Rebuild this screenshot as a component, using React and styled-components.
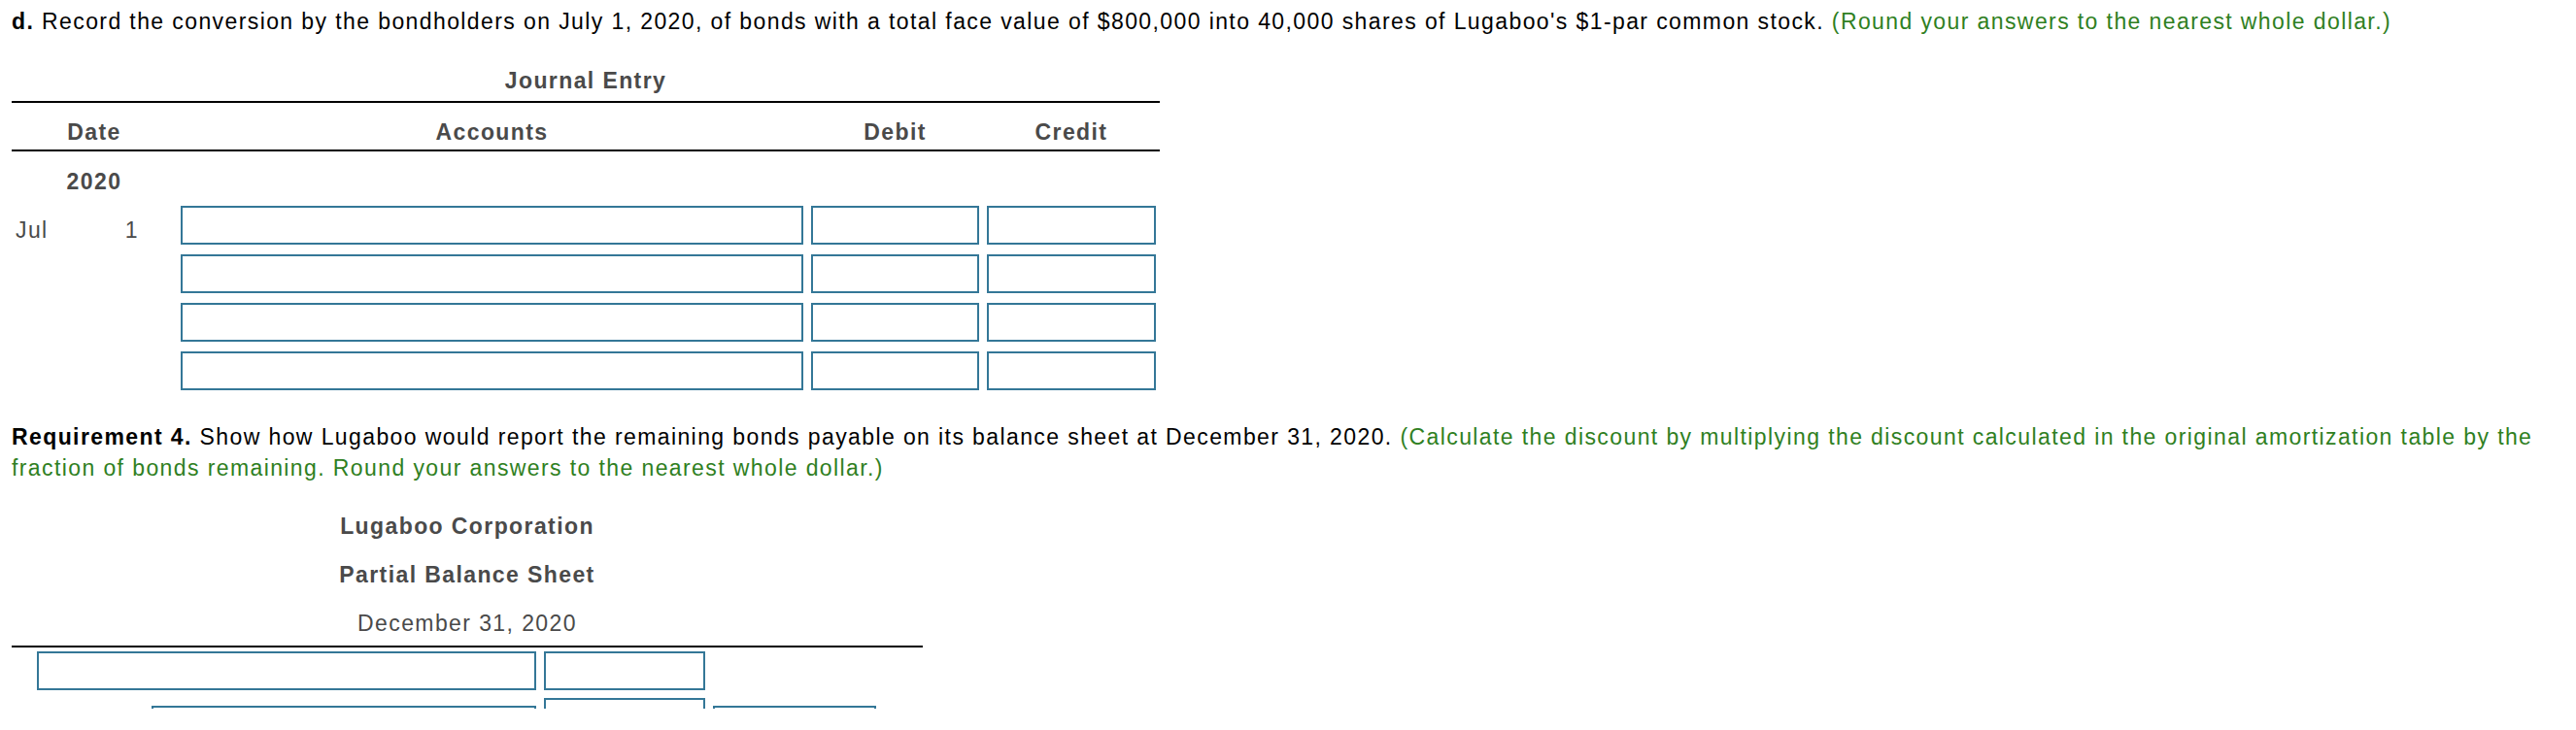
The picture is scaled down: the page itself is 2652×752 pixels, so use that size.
import React from "react";
import styled, { createGlobalStyle } from "styled-components";

const GlobalStyle = createGlobalStyle`
  body {
    margin: 0;
    background: #ffffff;
    font-family: "Liberation Sans", Arial, Helvetica, sans-serif;
  }
`;

const journalRows = [
  { month: "Jul", day: "1" },
  { month: "", day: "" },
  { month: "", day: "" },
  { month: "", day: "" },
];

function App() {
  return (
    <Page>
      <GlobalStyle />
      <Prompt>
        <b>d.</b> Record the conversion by the bondholders on July 1, 2020, of bonds with a total face value of
        $800,000 into 40,000 shares of Lugaboo's $1-par common stock.{" "}
        <Hint>(Round your answers to the nearest whole dollar.)</Hint>
      </Prompt>

      <Journal>
        <TableTitle>Journal Entry</TableTitle>
        <HeadRow>
          <HeadCell>Date</HeadCell>
          <HeadCell>Accounts</HeadCell>
          <HeadCell>Debit</HeadCell>
          <HeadCell>Credit</HeadCell>
        </HeadRow>
        <YearRow>
          <YearCell>2020</YearCell>
        </YearRow>
        {journalRows.map((row, i) => (
          <EntryRow key={i}>
            <DateCell>
              <Month>{row.month}</Month>
              <Day>{row.day}</Day>
            </DateCell>
            <Field />
            <Field />
            <Field />
          </EntryRow>
        ))}
      </Journal>

      <Prompt $gap="26px">
        <b>Requirement 4.</b> Show how Lugaboo would report the remaining bonds payable on its balance sheet at
        December 31, 2020.{" "}
        <Hint>
          (Calculate the discount by multiplying the discount calculated in the original amortization table by the
          fraction of bonds remaining. Round your answers to the nearest whole dollar.)
        </Hint>
      </Prompt>

      <Sheet>
        <SheetTitle $bold>Lugaboo Corporation</SheetTitle>
        <SheetTitle $bold>Partial Balance Sheet</SheetTitle>
        <SheetTitle>December 31, 2020</SheetTitle>
        <SheetRule />
        <SheetRow>
          <LabelField $indent="26px" />
          <Field />
          <Blank />
        </SheetRow>
        <SheetRow>
          <LabelField $indent="144px" $drop="8px" />
          <Field />
          <Field $drop="8px" />
        </SheetRow>
      </Sheet>
    </Page>
  );
}

export default App;

const Page = styled.div`
  height: 730px;
  overflow: hidden;
  padding: 6px 12px 0 12px;
  box-sizing: border-box;
  font-size: 23px;
  letter-spacing: 1.4px;
  line-height: 32px;
  color: #000000;
`;

const Prompt = styled.p`
  margin: ${(p) => p.$gap || "0"} 0 0 0;
  b {
    font-weight: 700;
  }
`;

const Hint = styled.span`
  color: #2f7f22;
`;

const Journal = styled.div`
  width: 1182px;
  margin-top: 29px;
  color: #4a4a4a;
`;

const TableTitle = styled.div`
  font-weight: 700;
  text-align: center;
  padding-bottom: 5px;
  border-bottom: 2px solid #000000;
`;

const grid = `
  display: grid;
  grid-template-columns: 170px 649px 181px 182px;
`;

const HeadRow = styled.div`
  ${grid}
  height: 50px;
  box-sizing: border-box;
  padding-top: 14px;
  border-bottom: 2px solid #000000;
`;

const HeadCell = styled.div`
  font-weight: 700;
  text-align: center;
`;

const YearRow = styled.div`
  ${grid}
  height: 52px;
  box-sizing: border-box;
  padding-top: 15px;
`;

const YearCell = styled.div`
  font-weight: 700;
  text-align: center;
`;

const EntryRow = styled.div`
  ${grid}
  height: 50px;
  box-sizing: border-box;
  padding: 4px 0;
`;

const DateCell = styled.div`
  display: flex;
  padding: 9px 0 0 4px;
  line-height: 32px;
`;

const Month = styled.span`
  width: 84px;
`;

const Day = styled.span`
  width: 43px;
  text-align: right;
`;

const Field = styled.div`
  margin: ${(p) => p.$drop || "0"} 4px 0 4px;
  height: 40px;
  box-sizing: border-box;
  border: 2px solid #347797;
  background: #ffffff;
`;

const Sheet = styled.div`
  width: 938px;
  margin-top: 28px;
  color: #4a4a4a;
`;

const SheetTitle = styled.div`
  width: 938px;
  text-align: center;
  font-weight: ${(p) => (p.$bold ? 700 : 400)};
  margin-bottom: 18px;

  &:last-of-type {
    margin-bottom: 7px;
  }
`;

const SheetRule = styled.div`
  border-top: 2px solid #000000;
  margin-top: -11px;
`;

const SheetRow = styled.div`
  display: grid;
  grid-template-columns: 544px 174px 176px;
  height: 48px;
  box-sizing: border-box;
  padding-top: 4px;
`;

const LabelField = styled(Field)`
  margin-left: ${(p) => p.$indent};
`;

const Blank = styled.div``;
